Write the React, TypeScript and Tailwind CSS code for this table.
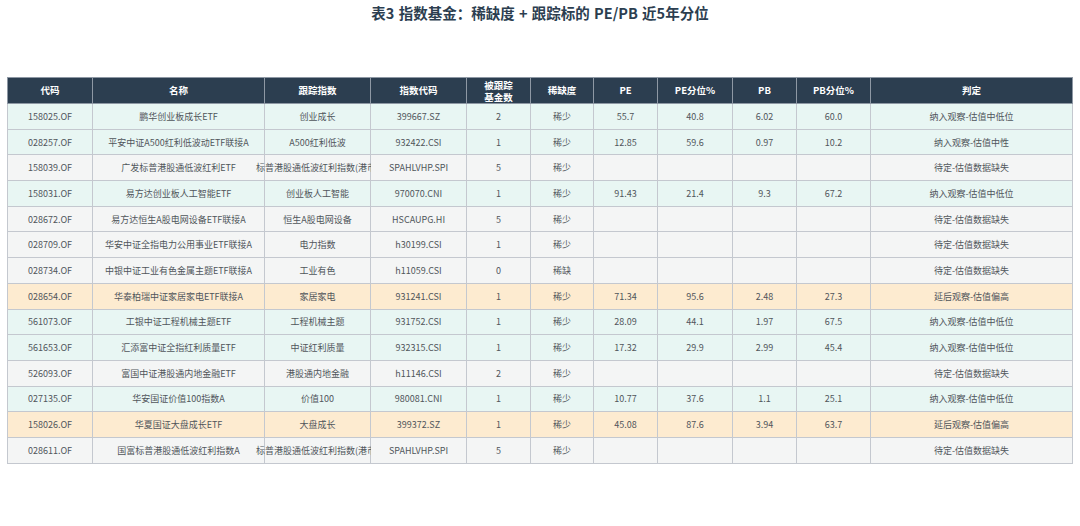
type Row = {
  code: string;
  name: string;
  index: string;
  indexCode: string;
  count: string;
  scarcity: string;
  pe: string;
  pePct: string;
  pb: string;
  pbPct: string;
  verdict: string;
  tone: 'teal' | 'gray' | 'orange';
};

const rows: Row[] = [
  { code: '158025.OF', name: '鹏华创业板成长ETF', index: '创业成长', indexCode: '399667.SZ', count: '2', scarcity: '稀少', pe: '55.7', pePct: '40.8', pb: '6.02', pbPct: '60.0', verdict: '纳入观察-估值中低位', tone: 'teal' },
  { code: '028257.OF', name: '平安中证A500红利低波动ETF联接A', index: 'A500红利低波', indexCode: '932422.CSI', count: '1', scarcity: '稀少', pe: '12.85', pePct: '59.6', pb: '0.97', pbPct: '10.2', verdict: '纳入观察-估值中性', tone: 'teal' },
  { code: '158039.OF', name: '广发标普港股通低波红利ETF', index: '标普港股通低波红利指数(港币)', indexCode: 'SPAHLVHP.SPI', count: '5', scarcity: '稀少', pe: '', pePct: '', pb: '', pbPct: '', verdict: '待定-估值数据缺失', tone: 'gray' },
  { code: '158031.OF', name: '易方达创业板人工智能ETF', index: '创业板人工智能', indexCode: '970070.CNI', count: '1', scarcity: '稀少', pe: '91.43', pePct: '21.4', pb: '9.3', pbPct: '67.2', verdict: '纳入观察-估值中低位', tone: 'teal' },
  { code: '028672.OF', name: '易方达恒生A股电网设备ETF联接A', index: '恒生A股电网设备', indexCode: 'HSCAUPG.HI', count: '5', scarcity: '稀少', pe: '', pePct: '', pb: '', pbPct: '', verdict: '待定-估值数据缺失', tone: 'gray' },
  { code: '028709.OF', name: '华安中证全指电力公用事业ETF联接A', index: '电力指数', indexCode: 'h30199.CSI', count: '1', scarcity: '稀少', pe: '', pePct: '', pb: '', pbPct: '', verdict: '待定-估值数据缺失', tone: 'gray' },
  { code: '028734.OF', name: '中银中证工业有色金属主题ETF联接A', index: '工业有色', indexCode: 'h11059.CSI', count: '0', scarcity: '稀缺', pe: '', pePct: '', pb: '', pbPct: '', verdict: '待定-估值数据缺失', tone: 'gray' },
  { code: '028654.OF', name: '华泰柏瑞中证家居家电ETF联接A', index: '家居家电', indexCode: '931241.CSI', count: '1', scarcity: '稀少', pe: '71.34', pePct: '95.6', pb: '2.48', pbPct: '27.3', verdict: '延后观察-估值偏高', tone: 'orange' },
  { code: '561073.OF', name: '工银中证工程机械主题ETF', index: '工程机械主题', indexCode: '931752.CSI', count: '1', scarcity: '稀少', pe: '28.09', pePct: '44.1', pb: '1.97', pbPct: '67.5', verdict: '纳入观察-估值中低位', tone: 'teal' },
  { code: '561653.OF', name: '汇添富中证全指红利质量ETF', index: '中证红利质量', indexCode: '932315.CSI', count: '1', scarcity: '稀少', pe: '17.32', pePct: '29.9', pb: '2.99', pbPct: '45.4', verdict: '纳入观察-估值中低位', tone: 'teal' },
  { code: '526093.OF', name: '富国中证港股通内地金融ETF', index: '港股通内地金融', indexCode: 'h11146.CSI', count: '2', scarcity: '稀少', pe: '', pePct: '', pb: '', pbPct: '', verdict: '待定-估值数据缺失', tone: 'gray' },
  { code: '027135.OF', name: '华安国证价值100指数A', index: '价值100', indexCode: '980081.CNI', count: '1', scarcity: '稀少', pe: '10.77', pePct: '37.6', pb: '1.1', pbPct: '25.1', verdict: '纳入观察-估值中低位', tone: 'teal' },
  { code: '158026.OF', name: '华夏国证大盘成长ETF', index: '大盘成长', indexCode: '399372.SZ', count: '1', scarcity: '稀少', pe: '45.08', pePct: '87.6', pb: '3.94', pbPct: '63.7', verdict: '延后观察-估值偏高', tone: 'orange' },
  { code: '028611.OF', name: '国富标普港股通低波红利指数A', index: '标普港股通低波红利指数(港币)', indexCode: 'SPAHLVHP.SPI', count: '5', scarcity: '稀少', pe: '', pePct: '', pb: '', pbPct: '', verdict: '待定-估值数据缺失', tone: 'gray' },
];

const toneBg = {
  teal: 'bg-[#e8f6f3]',
  gray: 'bg-[#f4f5f5]',
  orange: 'bg-[#fdebd0]',
};

const widths = ['w-[85px]', 'w-[172px]', 'w-[106px]', 'w-[96px]', 'w-[64px]', 'w-[63px]', 'w-[64px]', 'w-[75px]', 'w-[64px]', 'w-[74px]', 'w-[202px]'];

function Cell({ children, bg }: { children: React.ReactNode; bg: string }) {
  return (
    <td className={`relative ${bg} border border-[#c4c8cf] p-0 h-[25.7px]`}>
      <div className="flex justify-center whitespace-nowrap">{children}</div>
    </td>
  );
}

export default function App() {
  return (
    <div className="w-[1080px] h-[526px] bg-white font-['Noto_Sans_CJK_SC','Noto_Sans',sans-serif]">
      <h1 className="pt-[3px] text-center text-[14.5px] font-bold leading-[20px] text-[#2c3e50] [word-spacing:1px]">
        表3 指数基金：稀缺度 + 跟踪标的 PE/PB 近5年分位
      </h1>
      <div className="pl-[7px] pt-[54px]">
        <table className="table-fixed border-collapse w-[1065px] border-[1.5px] border-[#d0d3d8] text-[9px] leading-[11px] text-[#50555b]">
          <colgroup>
            {widths.map((w, i) => (
              <col key={i} className={w} />
            ))}
          </colgroup>
          <thead>
            <tr className="h-[26px] bg-[#2c3e50] text-white text-[9.5px]">
              {['代码', '名称', '跟踪指数', '指数代码'].map((h) => (
                <th key={h} className="border border-[#8e98a4] font-bold">{h}</th>
              ))}
              <th className="border border-[#8e98a4] font-bold leading-[12px]">
                <div>被跟踪</div>
                <div>基金数</div>
              </th>
              {['稀缺度', 'PE', 'PE分位%', 'PB', 'PB分位%', '判定'].map((h) => (
                <th key={h} className="border border-[#8e98a4] font-bold">{h}</th>
              ))}
            </tr>
          </thead>
          <tbody>
            {rows.map((r) => {
              const bg = toneBg[r.tone];
              return (
                <tr key={r.code}>
                  <Cell bg={bg}>{r.code}</Cell>
                  <Cell bg={bg}>{r.name}</Cell>
                  <Cell bg={bg}>{r.index}</Cell>
                  <Cell bg={bg}>{r.indexCode}</Cell>
                  <Cell bg={bg}>{r.count}</Cell>
                  <Cell bg={bg}>{r.scarcity}</Cell>
                  <Cell bg={bg}>{r.pe}</Cell>
                  <Cell bg={bg}>{r.pePct}</Cell>
                  <Cell bg={bg}>{r.pb}</Cell>
                  <Cell bg={bg}>{r.pbPct}</Cell>
                  <Cell bg={bg}>{r.verdict}</Cell>
                </tr>
              );
            })}
          </tbody>
        </table>
      </div>
    </div>
  );
}
